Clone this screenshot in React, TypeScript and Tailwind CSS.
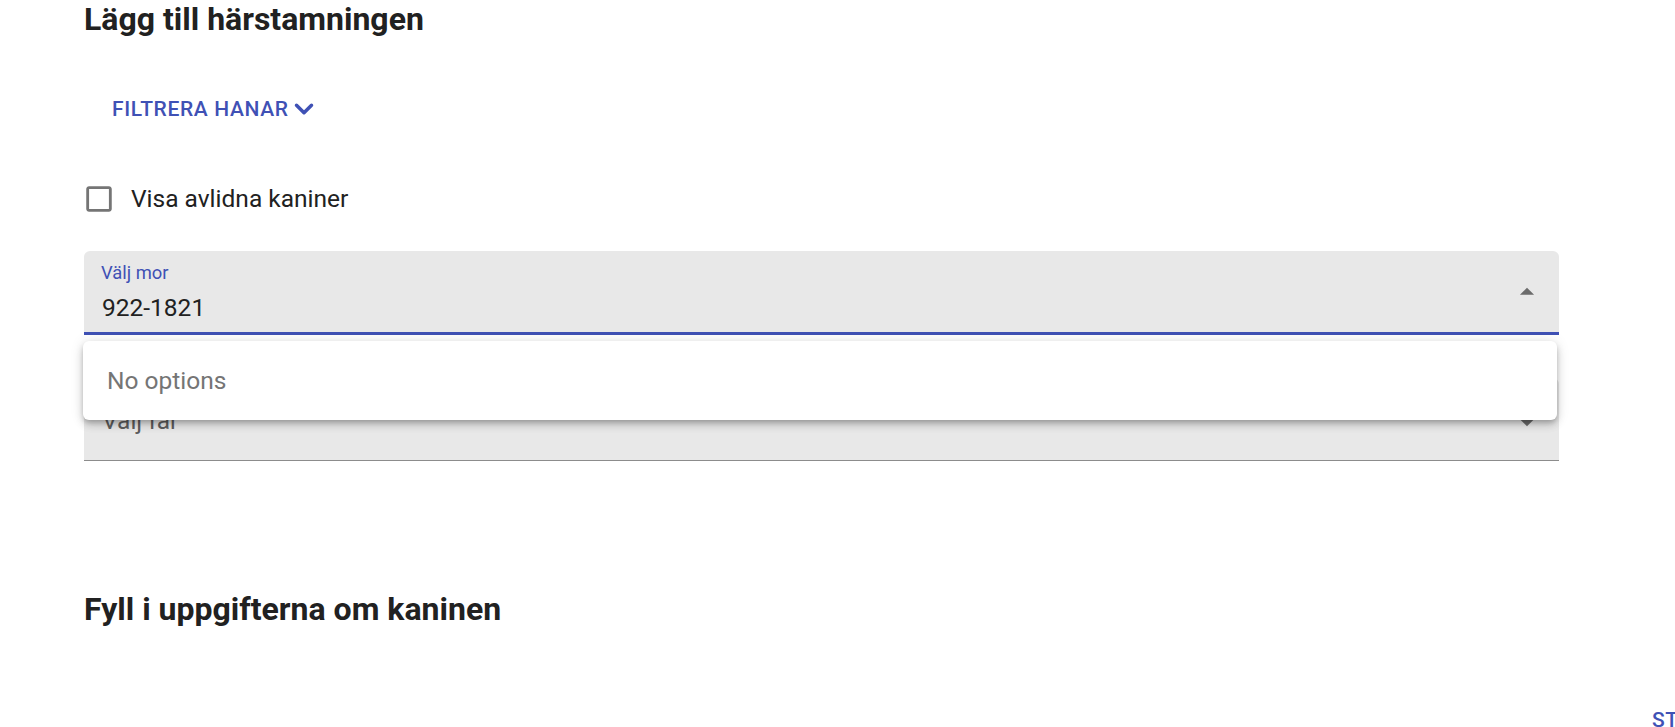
import { ChevronDown } from "lucide-react";

function ArrowDrop({ up = false }: { up?: boolean }) {
  return (
    <svg
      viewBox="0 0 24 24"
      className={up ? "w-[34px] h-[34px] rotate-180" : "w-[34px] h-[34px]"}
      fill="#6b6b6b"
    >
      <path d="M7 10l5 5 5-5z" />
    </svg>
  );
}

function CheckboxBlank() {
  return (
    <svg viewBox="0 0 24 24" className="w-[34px] h-[34px] shrink-0" fill="#757575">
      <path d="M19 5v14H5V5h14m0-2H5c-1.11 0-2 .9-2 2v14c0 1.1.89 2 2 2h14c1.1 0 2-.9 2-2V5c0-1.11-.9-2-2-2z" />
    </svg>
  );
}

export default function App() {
  return (
    <div className="relative w-full h-[727px] overflow-hidden bg-white font-['Roboto',sans-serif] text-[#212121]">
      <div className="pl-[84px] w-[1559px]">
        <h2 className="text-[32px] leading-[38px] font-bold">
          Lägg till härstamningen
        </h2>

        {/* filter toggle */}
        <div className="mt-[57px] pl-[28px] flex items-center h-[28px]">
          <button className="flex items-center text-[#3f51b5] text-[21px] leading-[28px] font-medium tracking-[0.03em] uppercase">
            Filtrera hanar
            <ChevronDown size={30} strokeWidth={2.8} className="ml-[0px]" />
          </button>
        </div>

        <label className="mt-[60px] flex items-center h-[32px] -ml-[2px] gap-[15px]">
          <CheckboxBlank />
          <span className="text-[24.5px] leading-[32px]">Visa avlidna kaniner</span>
        </label>

        {/* Välj mor - focused */}
        <div className="mt-[36px] relative h-[84px] bg-[#e8e8e8] rounded-t-[6px] border-b-[3px] border-[#3f51b5]">
          <div className="pl-[17px] pt-[10px] text-[18.4px] leading-[24px] text-[#3f51b5]">
            Välj mor
          </div>
          <div className="pl-[18px] pt-[7px] text-[24.5px] leading-[32px] text-[#212121]">
            922-1821
          </div>
          <div className="absolute right-[15px] top-[24px]">
            <ArrowDrop up />
          </div>
        </div>

        {/* Välj far */}
        <div className="mt-[43px] relative h-[83px] bg-[#e8e8e8] rounded-t-[6px] border-b border-[#8c8c8c]">
          <div className="pl-[18px] pt-[27px] text-[24.5px] leading-[32px] text-[#5d5d5d]">
            Välj far
          </div>
          <div className="absolute right-[15px] top-[27px]">
            <ArrowDrop />
          </div>
        </div>

        <h2 className="mt-[129px] text-[32px] leading-[38px] font-bold">
          Fyll i uppgifterna om kaninen
        </h2>

        <div className="mt-[78px] flex">
          <button className="ml-[1568px] whitespace-nowrap text-[#3f51b5] text-[21px] leading-[28px] font-medium tracking-[0.03em] uppercase">
            Stäng
          </button>
        </div>
      </div>

      {/* autocomplete popup */}
      <div className="absolute left-[83px] top-[341px] w-[1474px] bg-white rounded-[6px] shadow-[0_3px_5px_-1px_rgba(0,0,0,0.2),0_5px_8px_0_rgba(0,0,0,0.14),0_1px_14px_0_rgba(0,0,0,0.12)]">
        <div className="px-[24px] py-[21px] text-[24.5px] leading-[37px] text-[#757575]">
          No options
        </div>
      </div>
    </div>
  );
}
